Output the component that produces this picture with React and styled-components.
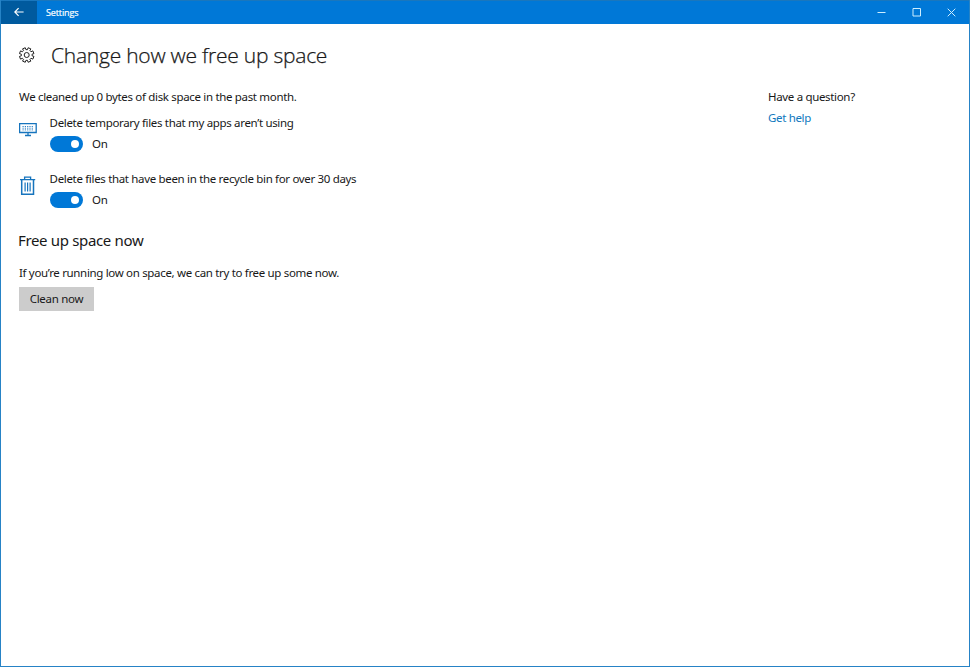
import React, { useState } from "react";
import styled, { createGlobalStyle } from "styled-components";

const settings = [
    {
        id: "temp",
        label: "Delete temporary files that my apps aren’t using",
        icon: <MonitorIcon />,
    },
    {
        id: "bin",
        label: "Delete files that have been in the recycle bin for over 30 days",
        icon: <TrashIcon />,
    },
];

export default function App() {
    const [enabled, setEnabled] = useState({ temp: true, bin: true });

    const toggle = (id) => {
        setEnabled({ ...enabled, [id]: !enabled[id] });
    };

    return (
        <Window>
            <GlobalStyle />
            <TitleBar>
                <BackButton aria-label="Back">
                    <svg width="10" height="10" viewBox="0 0 10 10">
                        <path d="M9.6 5H.8M4.6 1.2.8 5l3.8 3.8" />
                    </svg>
                </BackButton>
                <WindowTitle>Settings</WindowTitle>
                <WindowControls>
                    <ControlButton aria-label="Minimize">
                        <svg width="9" height="9" viewBox="0 0 9 9">
                            <path d="M.5 4.5h8" />
                        </svg>
                    </ControlButton>
                    <ControlButton aria-label="Maximize">
                        <svg width="9" height="9" viewBox="0 0 9 9">
                            <path d="M1 .5h7.5v7.5H1z" />
                        </svg>
                    </ControlButton>
                    <ControlButton aria-label="Close">
                        <svg width="9" height="9" viewBox="0 0 9 9">
                            <path d="m.7.7 7.6 7.6M8.3.7.7 8.3" />
                        </svg>
                    </ControlButton>
                </WindowControls>
            </TitleBar>
            <Header>
                <GearIcon />
                <h1>Change how we free up space</h1>
            </Header>
            <Content>
                <Main>
                    <Text>We cleaned up 0 bytes of disk space in the past month.</Text>
                    <SettingList>
                        {settings.map((s) => (
                            <Setting key={s.id}>
                                <SettingIcon>{s.icon}</SettingIcon>
                                <div>
                                    <Text>{s.label}</Text>
                                    <ToggleRow>
                                        <Switch
                                            role="switch"
                                            aria-checked={enabled[s.id]}
                                            $on={enabled[s.id]}
                                            onClick={() => toggle(s.id)}
                                        />
                                        <Text>{enabled[s.id] ? "On" : "Off"}</Text>
                                    </ToggleRow>
                                </div>
                            </Setting>
                        ))}
                    </SettingList>
                    <SectionTitle>Free up space now</SectionTitle>
                    <Text>
                        If you’re running low on space, we can try to free up some now.
                    </Text>
                    <CleanButton>Clean now</CleanButton>
                </Main>
                <Aside>
                    <Text>Have a question?</Text>
                    <HelpLink href="#">Get help</HelpLink>
                </Aside>
            </Content>
        </Window>
    );
}

function gearPath() {
    const points = [];
    for (let i = 0; i < 8; i++) {
        const middle = (i * Math.PI) / 4 + Math.PI / 8;
        [
            [-0.25, 5.4],
            [-0.2, 7.4],
            [0.2, 7.4],
            [0.25, 5.4],
        ].forEach(([offset, r]) => {
            const x = 7.7 + r * Math.cos(middle + offset);
            const y = 8 + r * Math.sin(middle + offset);
            points.push(`${x.toFixed(2)} ${y.toFixed(2)}`);
        });
    }
    return `M${points.join("L")}Z`;
}

function GearIcon() {
    return (
        <svg width="16" height="16" viewBox="0 0 16 16" fill="none" stroke="#222">
            <path d={gearPath()} strokeLinejoin="round" />
            <circle cx="7.7" cy="8" r="2.5" />
        </svg>
    );
}

function MonitorIcon() {
    return (
        <svg width="18" height="14" viewBox="0 0 18 14" fill="none" stroke="#1674bd">
            <path d="M.6.7h16.6v8.8H.6z" strokeWidth="1.3" />
            <path
                d="M3.5 3.5H15M3.5 5.2H15M3.5 6.9H15"
                strokeDasharray="1.2 1.1"
                strokeWidth=".9"
            />
            <path d="M9 9.5v3M6 12.5h6" strokeWidth="1.3" />
        </svg>
    );
}

function TrashIcon() {
    return (
        <svg width="18" height="20" viewBox="0 0 18 20" fill="none" stroke="#1674bd">
            <path d="M1 3.7h15.2M5.6 3.5V1.2h6v2.3" strokeWidth="1.3" />
            <path d="M2.7 4v14.3h11.8V4" strokeWidth="1.5" />
            <path d="M6.1 6.5v9M8.6 6.5v9M11.1 6.5v9" strokeWidth="1.2" />
        </svg>
    );
}

const GlobalStyle = createGlobalStyle`
    * {
        box-sizing: border-box;
    }
    body {
        margin: 0;
        background-color: #fff;
        color: #181818;
        font-family: "Noto Sans", "Open Sans", sans-serif;
    }
    h1, h2, p {
        margin: 0;
    }
    button {
        border: 0;
        padding: 0;
        font-family: inherit;
        color: inherit;
    }
`;

const Window = styled.div`
    height: 667px;
    border: 1px solid #2683c6;
    border-top: 0;
`;

const TitleBar = styled.header`
    display: flex;
    align-items: stretch;
    height: 24px;
    background-color: #0078d7;
    border-top: 1px solid #1a77bd;
    color: #fff;
    svg {
        fill: none;
        stroke: #fff;
    }
`;

const BackButton = styled.button`
    display: flex;
    align-items: center;
    justify-content: center;
    width: 36px;
    padding-bottom: 1px;
    background-color: #005a9e;
    svg {
        stroke-width: 1.2;
    }
`;

const WindowTitle = styled.span`
    flex-grow: 1;
    padding-left: 9px;
    font-family: "Open Sans", sans-serif;
    font-size: 9px;
    line-height: 23px;
    letter-spacing: -0.12px;
    -webkit-text-stroke: 0.2px #fff;
`;

const WindowControls = styled.div`
    display: flex;
    svg {
        stroke: #cdeeff;
    }
`;

const ControlButton = styled.button`
    display: flex;
    align-items: center;
    justify-content: center;
    width: 35px;
    background-color: transparent;
`;

const Header = styled.div`
    display: flex;
    align-items: center;
    gap: 16px;
    height: 62px;
    padding-left: 18px;
    h1 {
        font-family: "Open Sans", sans-serif;
        font-size: 21px;
        font-weight: 300;
        line-height: 30px;
        letter-spacing: -0.24px;
        -webkit-text-stroke: 0.25px #181818;
    }
`;

const Content = styled.div`
    display: flex;
    justify-content: space-between;
    padding: 3px 0 0 18px;
`;

const Main = styled.main`
    display: flex;
    flex-direction: column;
    align-items: flex-start;
`;

const Text = styled.p`
    font-size: 11.5px;
    line-height: 16px;
    letter-spacing: -0.33px;
    white-space: nowrap;
`;

const SettingList = styled.div`
    display: flex;
    flex-direction: column;
    gap: 19px;
    margin-top: 10px;
`;

const Setting = styled.div`
    display: flex;
    gap: 12.6px;
    height: 37px;
`;

const SettingIcon = styled.span`
    display: flex;
    align-items: center;
    width: 18px;
    height: 30px;
`;

const ToggleRow = styled.div`
    display: flex;
    align-items: center;
    gap: 9px;
    margin-top: 5px;
`;

const Switch = styled.button`
    display: flex;
    align-items: center;
    justify-content: ${(props) => (props.$on ? "flex-end" : "flex-start")};
    width: 33.4px;
    height: 16px;
    padding: 0 4px;
    border-radius: 8px;
    background-color: ${(props) => (props.$on ? "#0078d7" : "#999")};
    &::after {
        content: "";
        width: 8px;
        height: 8px;
        border-radius: 50%;
        background-color: #fff;
    }
`;

const SectionTitle = styled.h2`
    margin: 22px 0 15px -1px;
    font-size: 15px;
    font-weight: 400;
    line-height: 20px;
    letter-spacing: -0.34px;
`;

const CleanButton = styled.button`
    width: 75px;
    height: 24px;
    margin-top: 6px;
    padding-bottom: 1px;
    background-color: #ccc;
    font-size: 11.5px;
    letter-spacing: -0.28px;
`;

const Aside = styled.aside`
    display: flex;
    flex-direction: column;
    gap: 5px;
    width: 201px;
`;

const HelpLink = styled.a`
    font-size: 11.5px;
    line-height: 16px;
    letter-spacing: -0.33px;
    color: #0f78bd;
    text-decoration: none;
`;
